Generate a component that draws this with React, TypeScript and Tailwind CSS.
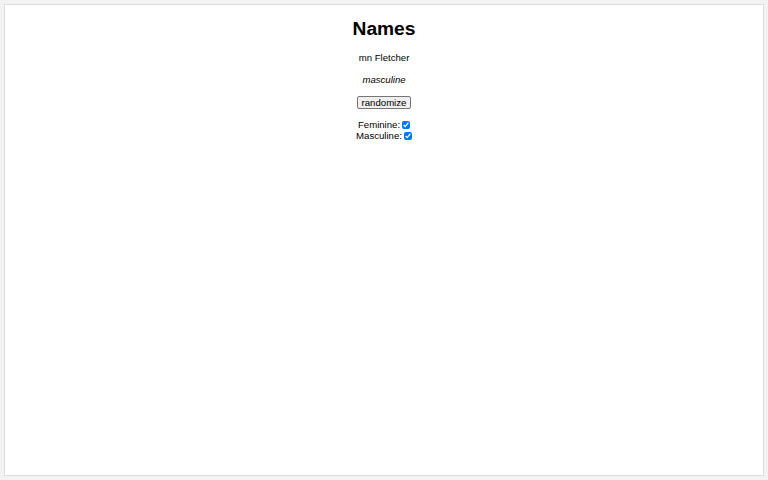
import React, { useState } from 'react';

const names = ['mn Fletcher'];

export default function App() {
  const [feminine, setFeminine] = useState(true);
  const [masculine, setMasculine] = useState(true);
  const [name] = useState(names[0]);

  return (
    <div className="min-h-screen bg-[#f2f2f2] p-[4px] font-['Liberation_Sans',Arial,sans-serif] text-black">
      <div className="h-[472px] border border-[#dcdcdc] bg-white text-center flow-root">
        <h1 className="mt-[13px] mb-[12px] text-[19.2px] font-bold leading-[22px]">Names</h1>
        <p className="my-[10px] text-[9.6px] leading-[12px]">{name}</p>
        <p className="my-[10px] text-[9.6px] leading-[12px] italic">masculine</p>
        <div className="my-[10px] text-[9.6px] leading-[13px] h-[13px]">
          <button className="inline-block align-top border border-[#767676] bg-[#efefef] rounded-[2px] px-[4px] text-[9.6px] leading-[11px] text-black">
            randomize
          </button>
        </div>
        <div className="text-[9.6px] leading-[11px]">
          <div>
            Feminine:
            <input
              type="checkbox"
              checked={feminine}
              onChange={e => setFeminine(e.target.checked)}
              className="ml-[2px] w-[8px] h-[8px] align-[-1px] accent-[#0075ff]"
            />
          </div>
          <div>
            Masculine:
            <input
              type="checkbox"
              checked={masculine}
              onChange={e => setMasculine(e.target.checked)}
              className="ml-[2px] w-[8px] h-[8px] align-[-1px] accent-[#0075ff]"
            />
          </div>
        </div>
      </div>
    </div>
  );
}
